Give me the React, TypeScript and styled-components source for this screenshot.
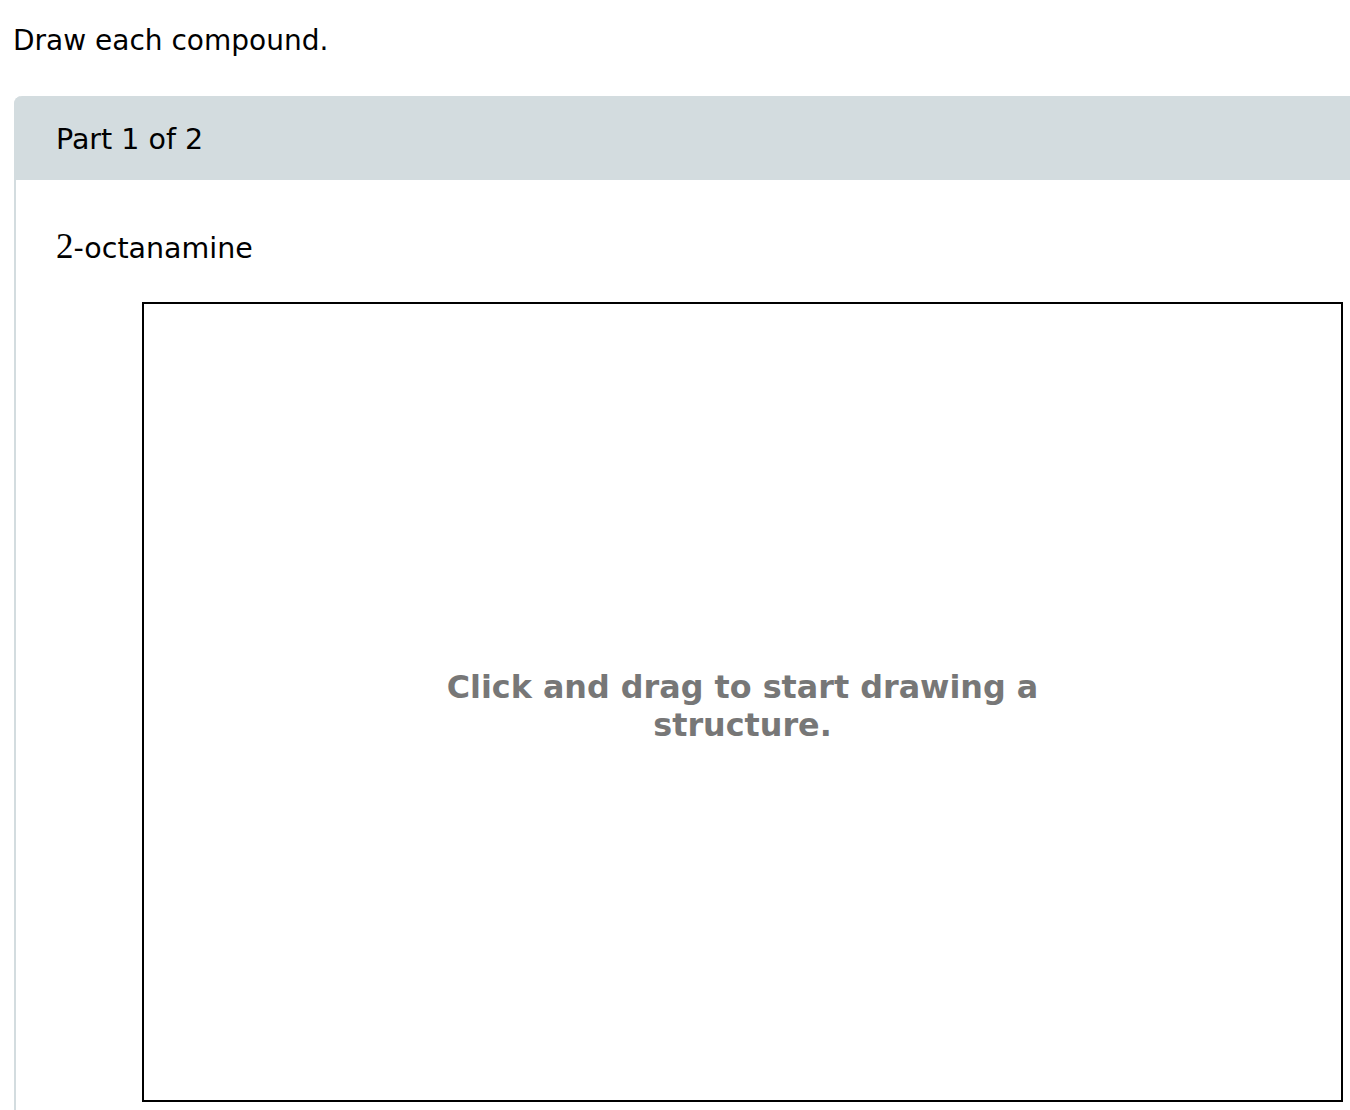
import React from "react";
import styled, { createGlobalStyle } from "styled-components";

const GlobalStyle = createGlobalStyle`
  html, body {
    margin: 0;
    padding: 0;
    background: #ffffff;
    overflow: hidden;
  }
  body {
    font-family: "DejaVu Sans", Verdana, sans-serif;
    color: #000000;
  }
`;

const Page = styled.div`
  width: 1350px;
  height: 1110px;
  padding: 24px 0 0 13px;
  box-sizing: border-box;
  overflow: hidden;
`;

const Instruction = styled.div`
  font-size: 28px;
  line-height: 34px;
  margin-bottom: 38px;
`;

const Panel = styled.div`
  margin-left: 1px;
  width: 1400px;
  border-left: 2px solid #d3dcdf;
  border-top-left-radius: 8px;
`;

const PanelHeader = styled.div`
  height: 84px;
  box-sizing: border-box;
  margin-left: -2px;
  padding: 4px 0 0 42px;
  background: #d3dcdf;
  border-top-left-radius: 8px;
  font-size: 28.5px;
  line-height: 80px;
`;

const PanelBody = styled.div`
  padding: 49px 0 40px 40px;
`;

const CompoundName = styled.div`
  height: 34px;
  font-size: 28.5px;
  line-height: 34px;
  margin-bottom: 39px;
`;

const MathDigit = styled.span`
  font-family: "Liberation Serif", "Times New Roman", "DejaVu Serif", serif;
  font-size: 35px;
  line-height: 1;
  font-weight: normal;
`;

const Canvas = styled.div`
  margin-left: 86px;
  width: 1201px;
  height: 800px;
  box-sizing: border-box;
  border: 2px solid #000000;
  display: flex;
  align-items: center;
  justify-content: center;
`;

const Hint = styled.div`
  width: 620px;
  margin-top: 8px;
  text-align: center;
  font-size: 31.8px;
  font-weight: bold;
  line-height: 38px;
  color: #777777;
`;

const App = () => {
  return (
    <Page>
      <GlobalStyle />
      <Instruction>Draw each compound.</Instruction>
      <Panel>
        <PanelHeader>Part 1 of 2</PanelHeader>
        <PanelBody>
          <CompoundName>
            <MathDigit>2</MathDigit>-octanamine
          </CompoundName>
          <Canvas>
            <Hint>Click and drag to start drawing a structure.</Hint>
          </Canvas>
        </PanelBody>
      </Panel>
    </Page>
  );
};

export default App;
